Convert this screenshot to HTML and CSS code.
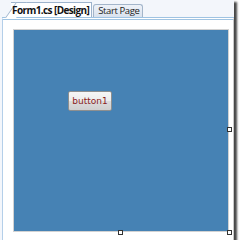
FILE: index.html
```html
<!DOCTYPE html>
<html>
<head>
<meta charset="utf-8">
<link rel="stylesheet" href="styles.css">
</head>
<body>
<div class="window">
  <div class="tabs">
    <div class="tab active">Form1.cs [Design]</div>
    <div class="tab inactive">Start Page</div>
  </div>
  <div class="panel">
    <div class="form">
      <div class="button1">button1</div>
      <span class="handle h-right"></span>
      <span class="handle h-bottom"></span>
      <span class="handle h-corner"></span>
    </div>
  </div>
</div>
</body>
</html>
```
FILE: styles.css
```css
html, body {
  margin: 0;
  padding: 0;
  background: #ffffff;
}
.window {
  width: 234px;
  height: 240px;
  display: flex;
  flex-direction: column;
  background: #f3f6fb;
  box-shadow: 3px 2px 2px rgba(40, 40, 40, 0.85);
  font-family: "Open Sans", "DejaVu Sans", sans-serif;
}
.tabs {
  height: 17px;
  display: flex;
  align-items: flex-end;
  padding-left: 11px;
  box-sizing: border-box;
}
.tab {
  position: relative;
  box-sizing: border-box;
  white-space: nowrap;
  color: #111;
}
.tab.active {
  height: 15px;
  line-height: 14px;
  font-size: 10px;
  letter-spacing: -0.6px;
  font-weight: bold;
  padding: 0 2px 0 1px;
  background: #ffffff;
  border-top: 1px solid #9db3cc;
  border-right: 1px solid #9db3cc;
  z-index: 2;
}
.tab.active::before {
  content: "";
  position: absolute;
  left: -6px;
  top: -1px;
  width: 10px;
  height: 15px;
  background: #ffffff;
  border-left: 1px solid #9db3cc;
  border-top: 1px solid #9db3cc;
  transform: skewX(-35deg);
  transform-origin: bottom left;
  z-index: -1;
}
.tab.inactive {
  height: 13px;
  line-height: 12px;
  font-size: 9.5px;
  letter-spacing: -0.4px;
  padding: 0 3px 0 4px;
  margin-left: 1px;
  background: linear-gradient(#eef2f8, #d9e2ee);
  border: 1px solid #a3b5ca;
  border-bottom: none;
  border-radius: 3px 3px 0 0;
  color: #222;
}
.panel {
  flex: 1;
  background: #ffffff;
  border-top: 3px double #9fc3e2;
  border-left: 1px solid #b4cfe9;
  border-right: 1px solid #c8c8c8;
  margin-left: 2px;
  padding: 9px 4px 8px 10px;
  display: flex;
  flex-direction: column;
}
.form {
  position: relative;
  flex: 1;
  background: #4682b4;
  border: 1px solid #d2d2d2;
}
.button1 {
  position: absolute;
  left: 54px;
  top: 61px;
  width: 44px;
  height: 20px;
  box-sizing: border-box;
  border: 1px solid #8e8f8f;
  border-radius: 2px;
  background: linear-gradient(#f6f6f6 0%, #ececec 50%, #dcdcdc 51%, #cfcfcf 100%);
  color: #8b1c1c;
  font-family: "DejaVu Sans", sans-serif;
  font-size: 9px;
  line-height: 18px;
  text-align: center;
}
.handle {
  position: absolute;
  width: 5px;
  height: 5px;
  box-sizing: border-box;
  border: 1px solid #333;
  background: #fff;
}
.h-right { right: -4px; top: 97px; }
.h-bottom { left: 104px; bottom: -4px; }
.h-corner { right: -4px; bottom: -4px; }
```
